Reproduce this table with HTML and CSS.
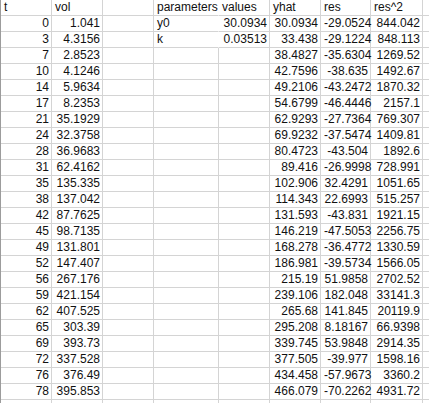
FILE: index.html
```html
<!DOCTYPE html>
<html>
<head>
<meta charset="utf-8">
<link rel="stylesheet" href="styles.css">
</head>
<body>
<div class="sheet">
  <div class="row"><div class="c">t</div><div class="c">vol</div><div class="c"></div><div class="c nb">parameters</div><div class="c">values</div><div class="c">yhat</div><div class="c">res</div><div class="c">res^2</div><div class="c f"></div></div>
  <div class="row"><div class="c n">0</div><div class="c n">1.041</div><div class="c"></div><div class="c nb">y0</div><div class="c n">30.0934</div><div class="c n">30.0934</div><div class="c n">-29.0524</div><div class="c n">844.042</div><div class="c f"></div></div>
  <div class="row"><div class="c n">3</div><div class="c n">4.3156</div><div class="c"></div><div class="c nb">k</div><div class="c n">0.03513</div><div class="c n">33.438</div><div class="c n">-29.1224</div><div class="c n">848.113</div><div class="c f"></div></div>
  <div class="row"><div class="c n">7</div><div class="c n">2.8523</div><div class="c"></div><div class="c"></div><div class="c"></div><div class="c n">38.4827</div><div class="c n">-35.6304</div><div class="c n">1269.52</div><div class="c f"></div></div>
  <div class="row"><div class="c n">10</div><div class="c n">4.1246</div><div class="c"></div><div class="c"></div><div class="c"></div><div class="c n">42.7596</div><div class="c n">-38.635</div><div class="c n">1492.67</div><div class="c f"></div></div>
  <div class="row"><div class="c n">14</div><div class="c n">5.9634</div><div class="c"></div><div class="c"></div><div class="c"></div><div class="c n">49.2106</div><div class="c n">-43.2472</div><div class="c n">1870.32</div><div class="c f"></div></div>
  <div class="row"><div class="c n">17</div><div class="c n">8.2353</div><div class="c"></div><div class="c"></div><div class="c"></div><div class="c n">54.6799</div><div class="c n">-46.4446</div><div class="c n">2157.1</div><div class="c f"></div></div>
  <div class="row"><div class="c n">21</div><div class="c n">35.1929</div><div class="c"></div><div class="c"></div><div class="c"></div><div class="c n">62.9293</div><div class="c n">-27.7364</div><div class="c n">769.307</div><div class="c f"></div></div>
  <div class="row"><div class="c n">24</div><div class="c n">32.3758</div><div class="c"></div><div class="c"></div><div class="c"></div><div class="c n">69.9232</div><div class="c n">-37.5474</div><div class="c n">1409.81</div><div class="c f"></div></div>
  <div class="row"><div class="c n">28</div><div class="c n">36.9683</div><div class="c"></div><div class="c"></div><div class="c"></div><div class="c n">80.4723</div><div class="c n">-43.504</div><div class="c n">1892.6</div><div class="c f"></div></div>
  <div class="row"><div class="c n">31</div><div class="c n">62.4162</div><div class="c"></div><div class="c"></div><div class="c"></div><div class="c n">89.416</div><div class="c n">-26.9998</div><div class="c n">728.991</div><div class="c f"></div></div>
  <div class="row"><div class="c n">35</div><div class="c n">135.335</div><div class="c"></div><div class="c"></div><div class="c"></div><div class="c n">102.906</div><div class="c n">32.4291</div><div class="c n">1051.65</div><div class="c f"></div></div>
  <div class="row"><div class="c n">38</div><div class="c n">137.042</div><div class="c"></div><div class="c"></div><div class="c"></div><div class="c n">114.343</div><div class="c n">22.6993</div><div class="c n">515.257</div><div class="c f"></div></div>
  <div class="row"><div class="c n">42</div><div class="c n">87.7625</div><div class="c"></div><div class="c"></div><div class="c"></div><div class="c n">131.593</div><div class="c n">-43.831</div><div class="c n">1921.15</div><div class="c f"></div></div>
  <div class="row"><div class="c n">45</div><div class="c n">98.7135</div><div class="c"></div><div class="c"></div><div class="c"></div><div class="c n">146.219</div><div class="c n">-47.5053</div><div class="c n">2256.75</div><div class="c f"></div></div>
  <div class="row"><div class="c n">49</div><div class="c n">131.801</div><div class="c"></div><div class="c"></div><div class="c"></div><div class="c n">168.278</div><div class="c n">-36.4772</div><div class="c n">1330.59</div><div class="c f"></div></div>
  <div class="row"><div class="c n">52</div><div class="c n">147.407</div><div class="c"></div><div class="c"></div><div class="c"></div><div class="c n">186.981</div><div class="c n">-39.5734</div><div class="c n">1566.05</div><div class="c f"></div></div>
  <div class="row"><div class="c n">56</div><div class="c n">267.176</div><div class="c"></div><div class="c"></div><div class="c"></div><div class="c n">215.19</div><div class="c n">51.9858</div><div class="c n">2702.52</div><div class="c f"></div></div>
  <div class="row"><div class="c n">59</div><div class="c n">421.154</div><div class="c"></div><div class="c"></div><div class="c"></div><div class="c n">239.106</div><div class="c n">182.048</div><div class="c n">33141.3</div><div class="c f"></div></div>
  <div class="row"><div class="c n">62</div><div class="c n">407.525</div><div class="c"></div><div class="c"></div><div class="c"></div><div class="c n">265.68</div><div class="c n">141.845</div><div class="c n">20119.9</div><div class="c f"></div></div>
  <div class="row"><div class="c n">65</div><div class="c n">303.39</div><div class="c"></div><div class="c"></div><div class="c"></div><div class="c n">295.208</div><div class="c n">8.18167</div><div class="c n">66.9398</div><div class="c f"></div></div>
  <div class="row"><div class="c n">69</div><div class="c n">393.73</div><div class="c"></div><div class="c"></div><div class="c"></div><div class="c n">339.745</div><div class="c n">53.9848</div><div class="c n">2914.35</div><div class="c f"></div></div>
  <div class="row"><div class="c n">72</div><div class="c n">337.528</div><div class="c"></div><div class="c"></div><div class="c"></div><div class="c n">377.505</div><div class="c n">-39.977</div><div class="c n">1598.16</div><div class="c f"></div></div>
  <div class="row"><div class="c n">76</div><div class="c n">376.49</div><div class="c"></div><div class="c"></div><div class="c"></div><div class="c n">434.458</div><div class="c n">-57.9673</div><div class="c n">3360.2</div><div class="c f"></div></div>
  <div class="row"><div class="c n">78</div><div class="c n">395.853</div><div class="c"></div><div class="c"></div><div class="c"></div><div class="c n">466.079</div><div class="c n">-70.2262</div><div class="c n">4931.72</div><div class="c f"></div></div>
  <div class="row"><div class="c"></div><div class="c"></div><div class="c"></div><div class="c"></div><div class="c"></div><div class="c"></div><div class="c"></div><div class="c"></div><div class="c f"></div></div>
</div>
</body>
</html>
```

FILE: styles.css
```css
html, body {
  margin: 0;
  padding: 0;
  background: #ffffff;
  overflow: hidden;
}
.sheet {
  width: 429px;
  height: 403px;
  overflow: hidden;
  border-left: 1px solid #9c9c9c;
  box-sizing: border-box;
  font-family: "Liberation Sans", Arial, sans-serif;
  font-size: 12px;
  color: #111111;
}
.row {
  display: flex;
  height: 16px;
}
.c {
  flex: none;
  box-sizing: border-box;
  width: 51px;
  height: 16px;
  border-right: 1px solid #d4d4d4;
  border-bottom: 1px solid #d4d4d4;
  padding: 0 2px 0 3px;
  line-height: 15px;
  white-space: nowrap;
}
.c:nth-child(4) {
  width: 65px;
}
.c:nth-child(7) {
  width: 50px;
}
.c:nth-child(8) {
  width: 52px;
}
.n {
  text-align: right;
}
.nb {
  border-right-color: transparent;
}
.f {
  flex: 1 1 auto;
  width: auto;
  border-right: none;
}
```
